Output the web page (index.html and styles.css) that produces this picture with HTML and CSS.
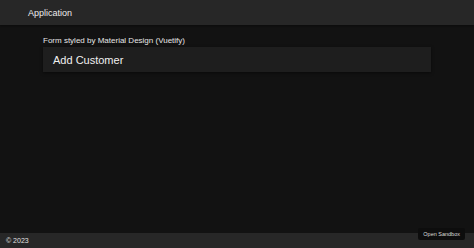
FILE: index.html
```html
<!DOCTYPE html>
<html>
    <head>
        <meta charset="utf-8" />
        <title>Application</title>
        <link rel="stylesheet" href="styles.css">
    </head>
    <body>
        <div class="app">
            <header class="app_bar">
                <span class="app_title">Application</span>
            </header>
            <main class="main">
                <div class="container">
                    <p class="form_label">Form styled by Material Design (Vuetify)</p>
                    <div class="card">
                        <h4 class="card_title">Add Customer</h4>
                    </div>
                </div>
            </main>
            <footer class="footer">
                <span class="copy">&copy; 2023</span>
            </footer>
            <a class="sandbox_btn">Open Sandbox</a>
        </div>
    </body>
</html>
```

FILE: styles.css
```css
* {
	padding: 0;
	margin: 0;
	box-sizing: border-box;
}
body {
	background: #121212;
	font-family: "Liberation Sans", Arial, sans-serif;
	color: #ffffff;
}
.app {
	min-height: 100vh;
	display: flex;
	flex-direction: column;
	position: relative;
}
.app_bar {
	height: 25px;
	background: #272727;
	display: flex;
	align-items: center;
	padding-left: 28px;
	box-shadow: 0 1px 2px rgba(0,0,0,0.4);
}
.app_title {
	font-size: 9px;
	color: #eeeeee;
}
.main {
	flex: 1;
}
.container {
	padding: 11px 43px 0 43px;
}
.form_label {
	font-size: 8px;
	color: #e6e6e6;
	line-height: 10px;
	margin-bottom: 1px;
}
.card {
	height: 25px;
	background: #1e1e1e;
	display: flex;
	align-items: center;
	padding-left: 10px;
	box-shadow: 0 1px 3px rgba(0,0,0,0.5);
}
.card_title {
	font-size: 11px;
	font-weight: normal;
	color: #f0f0f0;
}
.footer {
	height: 15px;
	background: #272727;
	display: flex;
	align-items: center;
	padding-left: 6px;
}
.copy {
	font-size: 7px;
	color: #e0e0e0;
}
.sandbox_btn {
	position: absolute;
	right: 9px;
	bottom: 8px;
	background: #0d0d0d;
	color: #dddddd;
	font-size: 5.5px;
	padding: 3px 5px;
	border-radius: 2px;
}
```
